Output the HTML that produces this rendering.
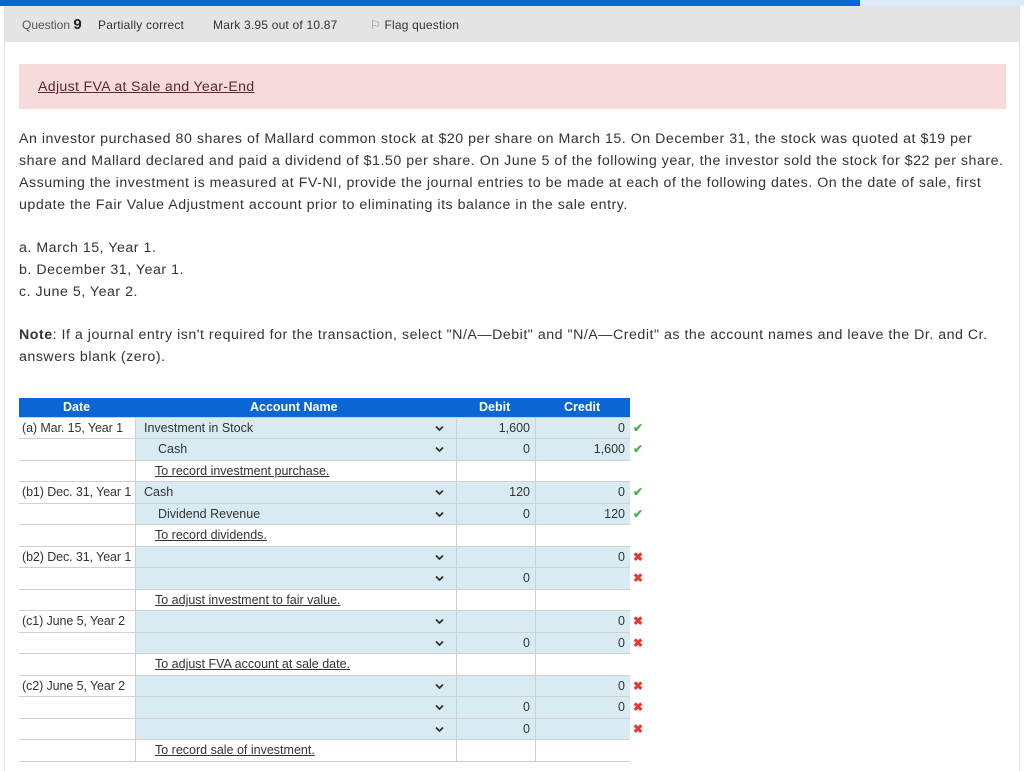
<!DOCTYPE html>
<html><head><meta charset="utf-8"><style>
*{margin:0;padding:0;box-sizing:border-box}
body{width:1024px;height:771px;background:#fff;font-family:"Liberation Sans",sans-serif;color:#333;position:relative;overflow:hidden}
.a{position:absolute;white-space:nowrap}
.t{font-size:14.2px;letter-spacing:0.52px}
.r{position:absolute;left:19px;width:611px;height:22px;border-top:1px solid #d0d0d0;font-size:12.5px;line-height:21px}
.r div{position:absolute;top:0;height:21px}
.d{left:0;width:116px;padding-left:3px;background:#fff;letter-spacing:-0.1px}
.ac{left:116px;width:321px;border-left:1px solid #d0d0d0;padding-left:8px}
.db{left:437px;width:79px;border-left:1px solid #d0d0d0;text-align:right;padding-right:5px}
.cr{left:516px;width:95px;border-left:1px solid #d0d0d0;text-align:right;padding-right:5px}
.s{background:#d8ebf2}
.ind{padding-left:22px}
.m{text-decoration:underline;padding-left:19px}
.chev{position:absolute;right:12px;top:7px;width:9px;height:7px}
.ok{position:absolute;left:614px;color:#4caf50;font-size:12px;font-weight:bold}
.x{position:absolute;left:614px;color:#e53935;font-size:12px;font-weight:bold}
</style></head><body>
<svg width="0" height="0" style="position:absolute"><defs><symbol id="cv" viewBox="0 0 9 7"><path d="M1 1.5 L4.5 5 L8 1.5" fill="none" stroke="#333" stroke-width="1.8"/></symbol></defs></svg>
<div class="a" style="left:0;top:0;width:860px;height:6px;background:#0b66d4"></div>
<div class="a" style="left:860px;top:0;width:164px;height:6px;background:#dde9f8"></div>
<div class="a" style="left:4px;top:6px;width:1px;height:765px;background:#e2e2e2"></div>
<div class="a" style="left:1019px;top:6px;width:1px;height:765px;background:#e2e2e2"></div>
<div class="a" style="left:5px;top:6px;width:1014px;height:36px;background:#e4e4e4"></div>
<div class="a" style="left:22px;top:16px;font-size:12px;color:#555">Question <b style="font-size:15px;color:#222">9</b></div>
<div class="a" style="left:98px;top:18px;font-size:12px;color:#333;letter-spacing:0.2px">Partially correct</div>
<div class="a" style="left:213px;top:18px;font-size:12px;color:#333;letter-spacing:0.2px">Mark 3.95 out of 10.87</div>
<div class="a" style="left:370px;top:18px;font-size:12px;color:#333;letter-spacing:0.2px"><span style="color:#888">&#9872;</span> Flag question</div>
<div class="a" style="left:19px;top:64px;width:987px;height:45px;background:#f7dadb"></div>
<div class="a" style="left:38px;top:79px;font-size:14.2px;color:#5a2a2a;text-decoration:underline;letter-spacing:0.3px">Adjust FVA at Sale and Year-End</div>
<div class="a t" style="left:19px;top:128px;line-height:22px">An investor purchased 80 shares of Mallard common stock at $20 per share on March 15. On December 31, the stock was quoted at $19 per<br>share and Mallard declared and paid a dividend of $1.50 per share. On June 5 of the following year, the investor sold the stock for $22 per share.<br>Assuming the investment is measured at FV-NI, provide the journal entries to be made at each of the following dates. On the date of sale, first<br>update the Fair Value Adjustment account prior to eliminating its balance in the sale entry.</div>
<div class="a t" style="left:19px;top:237px;line-height:22px">a. March 15, Year 1.<br>b. December 31, Year 1.<br>c. June 5, Year 2.</div>
<div class="a t" style="left:19px;top:324px;line-height:22px"><b>Note</b>: If a journal entry isn't required for the transaction, select "N/A—Debit" and "N/A—Credit" as the account names and leave the Dr. and Cr.<br>answers blank (zero).</div>
<div class="a" style="left:19px;top:398px;width:611px;height:19px;background:#0b66d4;color:#fff;font-size:12.5px;font-weight:bold;line-height:19px">
<span class="a" style="left:44px">Date</span><span class="a" style="left:231px">Account Name</span><span class="a" style="left:460px">Debit</span><span class="a" style="left:545px">Credit</span></div>

<div class="r" style="top:417px"><div class="d">(a) Mar. 15, Year 1</div><div class="ac s">Investment in Stock<svg class="chev"><use href="#cv"/></svg></div><div class="db s">1,600</div><div class="cr s">0</div><span class="ok">&#10004;</span></div>
<div class="r" style="top:438px"><div class="d"></div><div class="ac s ind">Cash<svg class="chev"><use href="#cv"/></svg></div><div class="db s">0</div><div class="cr s">1,600</div><span class="ok">&#10004;</span></div>
<div class="r" style="top:460px"><div class="d"></div><div class="ac m">To record investment purchase.</div><div class="db"></div><div class="cr"></div></div>
<div class="r" style="top:481px"><div class="d">(b1) Dec. 31, Year 1</div><div class="ac s">Cash<svg class="chev"><use href="#cv"/></svg></div><div class="db s">120</div><div class="cr s">0</div><span class="ok">&#10004;</span></div>
<div class="r" style="top:503px"><div class="d"></div><div class="ac s ind">Dividend Revenue<svg class="chev"><use href="#cv"/></svg></div><div class="db s">0</div><div class="cr s">120</div><span class="ok">&#10004;</span></div>
<div class="r" style="top:524px"><div class="d"></div><div class="ac m">To record dividends.</div><div class="db"></div><div class="cr"></div></div>
<div class="r" style="top:546px"><div class="d">(b2) Dec. 31, Year 1</div><div class="ac s"><svg class="chev"><use href="#cv"/></svg></div><div class="db s"></div><div class="cr s">0</div><span class="x">&#10006;</span></div>
<div class="r" style="top:567px"><div class="d"></div><div class="ac s"><svg class="chev"><use href="#cv"/></svg></div><div class="db s">0</div><div class="cr s"></div><span class="x">&#10006;</span></div>
<div class="r" style="top:589px"><div class="d"></div><div class="ac m">To adjust investment to fair value.</div><div class="db"></div><div class="cr"></div></div>
<div class="r" style="top:610px"><div class="d">(c1) June 5, Year 2</div><div class="ac s"><svg class="chev"><use href="#cv"/></svg></div><div class="db s"></div><div class="cr s">0</div><span class="x">&#10006;</span></div>
<div class="r" style="top:632px"><div class="d"></div><div class="ac s"><svg class="chev"><use href="#cv"/></svg></div><div class="db s">0</div><div class="cr s">0</div><span class="x">&#10006;</span></div>
<div class="r" style="top:653px"><div class="d"></div><div class="ac m">To adjust FVA account at sale date.</div><div class="db"></div><div class="cr"></div></div>
<div class="r" style="top:675px"><div class="d">(c2) June 5, Year 2</div><div class="ac s"><svg class="chev"><use href="#cv"/></svg></div><div class="db s"></div><div class="cr s">0</div><span class="x">&#10006;</span></div>
<div class="r" style="top:696px"><div class="d"></div><div class="ac s"><svg class="chev"><use href="#cv"/></svg></div><div class="db s">0</div><div class="cr s">0</div><span class="x">&#10006;</span></div>
<div class="r" style="top:718px"><div class="d"></div><div class="ac s"><svg class="chev"><use href="#cv"/></svg></div><div class="db s">0</div><div class="cr s"></div><span class="x">&#10006;</span></div>
<div class="r" style="top:739px;border-bottom:1px solid #d0d0d0;height:23px"><div class="d"></div><div class="ac m">To record sale of investment.</div><div class="db"></div><div class="cr"></div></div>
</body></html>
